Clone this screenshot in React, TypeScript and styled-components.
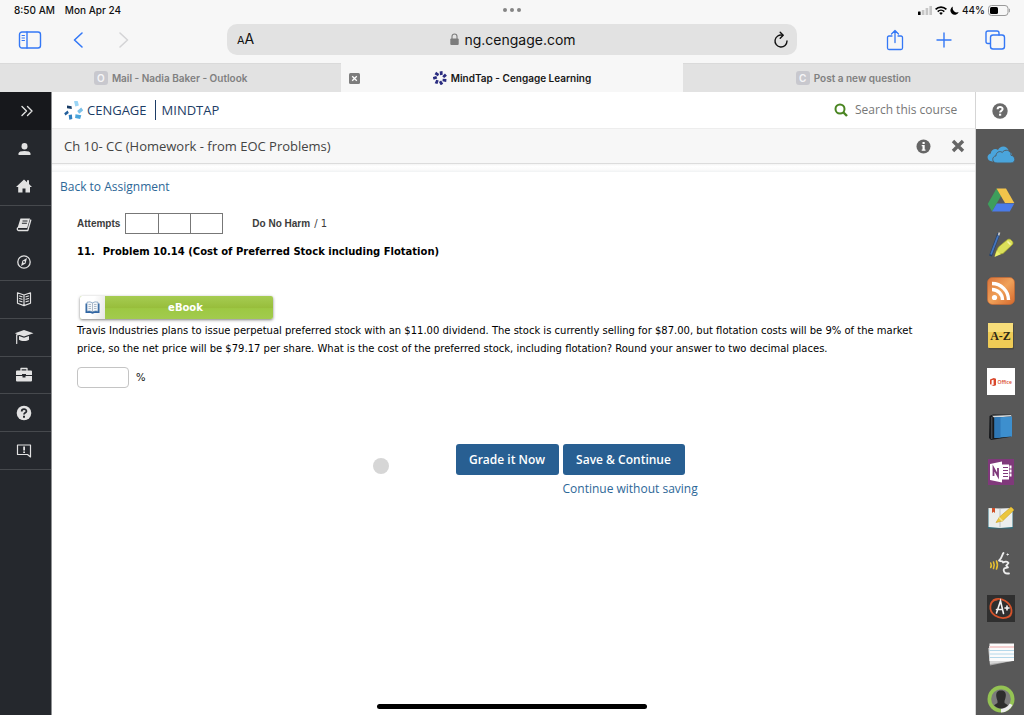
import React from "react";
import styled, { createGlobalStyle } from "styled-components";

const ios = `Inter, "Liberation Sans", sans-serif`;
const open = `"Open Sans", "Noto Sans", sans-serif`;
const verdana = `Verdana, "DejaVu Sans", sans-serif`;

const GlobalStyle = createGlobalStyle`
  *, *::before, *::after { box-sizing: border-box; }
  body { margin: 0; background: #fff; font-family: ${open}; }
  button { font: inherit; padding: 0; border: 0; background: none; cursor: pointer; color: inherit; }
  a { text-decoration: none; color: inherit; }
  svg { display: block; flex: none; }
`;

const Page = styled.div`
  position: relative;
  display: flex;
  flex-direction: column;
  height: 100vh;
  overflow: hidden;
`;

/* ---------- browser chrome ---------- */
const StatusBar = styled.div`
  display: grid;
  grid-template-columns: 1fr auto 1fr;
  align-items: center;
  height: 20px;
  padding: 0 14px;
  background: #f7f7f7;
  font: 500 10px/20px ${ios};
  color: #111;
`;
const StatusLeft = styled.div`
  display: flex;
  gap: 10px;
`;
const StatusRight = styled.div`
  display: flex;
  justify-content: flex-end;
  align-items: center;
  gap: 3px;
`;
const Toolbar = styled.div`
  display: grid;
  grid-template-columns: 1fr minmax(0, 570px) 1fr;
  align-items: center;
  height: 43px;
  padding: 0 18px 4px;
  background: #f7f7f7;
`;
const ToolGroup = styled.div<{ $end?: boolean }>`
  display: flex;
  align-items: center;
  justify-content: ${(p) => (p.$end ? "flex-end" : "flex-start")};
  gap: ${(p) => (p.$end ? "28px" : "24px")};
  color: #3478f6;
`;
const ToolButton = styled.button`
  display: flex;
  color: inherit;
  &:disabled { color: #d4d4d6; }
`;
const AddressBar = styled.div`
  display: grid;
  grid-template-columns: 1fr auto 1fr;
  align-items: center;
  height: 31px;
  padding: 0 8px 0 10px;
  border-radius: 10px;
  background: #e2e2e2;
  color: #111;
`;
const TextSize = styled.button`
  justify-self: start;
  font: 400 14px/20px ${ios};
  small { font-size: 11px; }
`;
const Host = styled.div`
  display: flex;
  align-items: center;
  gap: 5px;
  font: 400 14px/20px ${ios};
`;
const Reload = styled.button`
  justify-self: end;
`;
const TabBar = styled.nav`
  display: grid;
  grid-template-columns: repeat(3, 1fr);
  height: 29px;
  background: #f7f7f7;
`;
const Tab = styled.div<{ $active?: boolean }>`
  display: grid;
  grid-template-columns: 18px 1fr 18px;
  align-items: center;
  padding: 0 8px;
  background: ${(p) => (p.$active ? "#f7f7f7" : "#e2e2e2")};
  border-top: 1px solid ${(p) => (p.$active ? "#f7f7f7" : "#dadada")};
  color: ${(p) => (p.$active ? "#161616" : "#808080")};
  font: 600 10px/14px ${ios};
`;
const TabTitle = styled.a`
  grid-column: 2;
  display: flex;
  align-items: center;
  justify-content: center;
  gap: 4px;
`;
const Favicon = styled.span`
  width: 14px;
  height: 14px;
  border-radius: 3px;
  background: #c8c8ce;
  color: #f5f5f7;
  text-align: center;
`;

/* ---------- course shell ---------- */
const Shell = styled.div`
  flex: 1;
  display: flex;
  min-height: 0;
`;
const SideNav = styled.nav`
  flex: 0 0 52px;
  display: flex;
  flex-direction: column;
  background: #25282d;
  border-right: 1px solid #8f9193;
  color: #e2e2e2;
`;
const Expand = styled.button`
  display: flex;
  align-items: center;
  justify-content: center;
  height: 38px;
  padding-left: 3px;
  background: #17181c;
`;
const NavList = styled.div`
  display: grid;
  grid-template-rows: repeat(9, 1fr);
  height: 340px;
`;
const NavItem = styled.a<{ $line?: boolean }>`
  display: flex;
  align-items: center;
  justify-content: center;
  padding-right: 3px;
  border-bottom: 1px solid ${(p) => (p.$line ? "#46494d" : "transparent")};
`;
const Main = styled.main`
  flex: 1;
  min-width: 0;
  display: flex;
  flex-direction: column;
`;
const BrandBar = styled.header`
  display: flex;
  align-items: center;
  justify-content: space-between;
  height: 37px;
  padding: 0 12px;
  border-bottom: 1px solid #ededed;
`;
const Brand = styled.a`
  display: flex;
  align-items: center;
  gap: 4px;
  color: #1d3d66;
  font: 400 13px/20px ${open};
`;
const BrandProduct = styled.span`
  margin-left: 4px;
  padding-left: 6px;
  border-left: 1px solid #1d3d66;
`;
const Search = styled.label`
  display: flex;
  align-items: center;
  gap: 7px;
`;
const SearchInput = styled.input`
  width: 108px;
  padding: 0;
  border: 0;
  outline: 0;
  background: none;
  font: 400 12px/20px ${open};
  color: #555;
  &::placeholder { color: #777; opacity: 1; }
`;
const TitleBar = styled.div`
  display: flex;
  align-items: center;
  justify-content: space-between;
  height: 35px;
  padding: 0 10px 0 12px;
  background: #f7f7f7;
  border-bottom: 1px solid #dcdcdc;
`;
const ActivityTitle = styled.h1`
  margin: 0;
  font: 400 13px/20px ${open};
  color: #444;
`;
const TitleActions = styled.div`
  display: flex;
  align-items: center;
  gap: 20px;
  color: #6a6a6a;
`;
const Strip = styled.div`
  flex: none;
  height: 8px;
  background: linear-gradient(#f4f4f4, #fff 30%, #fbfbfb 70%, #f0f2f3);
`;
const Content = styled.div`
  flex: 1;
  padding: 2px 26px 0 25px;
`;
const BackLink = styled.a`
  display: inline-block;
  margin-left: -17px;
  font: 400 12px/20px ${open};
  color: #2d6797;
`;
const AttemptRow = styled.div`
  display: flex;
  align-items: center;
  height: 21px;
  margin-top: 16px;
  font: 700 10px/14px "Liberation Sans", Arial, sans-serif;
  color: #3c3c3c;
`;
const AttemptBoxes = styled.div`
  display: grid;
  grid-template-columns: repeat(3, 1fr);
  width: 98px;
  height: 21px;
  margin: 0 29px 0 5px;
  border: 1px solid #777;
`;
const AttemptBox = styled.span`
  & + & { border-left: 1px solid #777; }
`;
const Score = styled.span`
  margin-left: 4px;
  font-weight: 400;
  font-family: ${verdana};
`;
const ProblemTitle = styled.h2`
  display: flex;
  gap: 8px;
  margin: 10px 0 0;
  font: 700 10px/16px ${verdana};
  color: #000;
`;
const EBook = styled.button`
  display: flex;
  width: 193px;
  height: 23px;
  margin: 36px 0 0 3px;
  border-radius: 2px;
  overflow: hidden;
  box-shadow: 0 1px 3px rgba(0, 0, 0, 0.5);
  background: linear-gradient(#a6cc52, #98be3c 50%, #9dc843 55%, #a2cb4e);
`;
const EBookIcon = styled.span`
  display: flex;
  align-items: center;
  justify-content: center;
  width: 25px;
  height: 23px;
  background: linear-gradient(100deg, #fff 50%, #e6e6e6);
`;
const EBookLabel = styled.span`
  flex: 1;
  padding-right: 7px;
  font: 700 10px/23px ${verdana};
  color: #fff;
`;
const Question = styled.p`
  margin: 3px 0 0;
  padding-right: 12px;
  font: 400 10px/18px ${verdana};
  color: #000;
`;
const Answer = styled.label`
  display: flex;
  align-items: center;
  gap: 7px;
  margin-top: 9px;
  font: 400 10px/16px ${verdana};
  color: #111;
`;
const AnswerInput = styled.input`
  width: 52px;
  height: 21px;
  border: 1px solid #c4c4c4;
  border-radius: 4px;
  background: #fff;
`;
const Actions = styled.div`
  display: grid;
  grid-template-columns: 103px 122px 14px;
  justify-content: center;
  column-gap: 4px;
  row-gap: 4px;
  margin-top: 56px;
  padding-left: 132px;
`;
const ActionButton = styled.button`
  height: 31px;
  border-radius: 3px;
  background: #285f92;
  color: #fff;
  font: 600 12px/20px ${open};
`;
const SkipLink = styled.a`
  grid-column: 2 / 4;
  grid-row: 2;
  font: 400 12px/20px ${open};
  color: #2d6797;
  white-space: nowrap;
`;

/* ---------- app rail ---------- */
const Rail = styled.aside`
  flex: 0 0 49px;
  display: flex;
  flex-direction: column;
  border-left: 1px solid #d5d5d5;
`;
const RailHead = styled.button`
  display: flex;
  align-items: center;
  justify-content: center;
  height: 37px;
  flex: none;
`;
const RailApps = styled.div`
  flex: 1;
  display: flex;
  flex-direction: column;
  align-items: center;
  justify-content: space-between;
  padding: 12px 0 2px 1px;
  background: #585858;
`;
const AppButton = styled.button`
  width: 28px;
  height: 28px;
`;

/* ---------- overlays ---------- */
const TouchDot = styled.div`
  position: absolute;
  left: 373px;
  top: 458px;
  width: 16px;
  height: 16px;
  border-radius: 50%;
  background: #d6d6d6;
`;
const HomeIndicator = styled.div`
  position: absolute;
  left: 50%;
  bottom: 6px;
  width: 270px;
  height: 5px;
  transform: translateX(-50%);
  border-radius: 3px;
  background: #000;
`;

const line = { fill: "none", stroke: "currentColor", strokeLinecap: "round", strokeLinejoin: "round" } as const;

const CengageMark = () => (
  <svg width="19" height="19" viewBox="0 0 19 19">
    <path d="M10 .2l3.600-.6 1.300 5-3.600 1z" fill="#9bd5f5" />
    <path d="M13.200 10l4-3.600 2 2.800-4 3.600z" fill="#7cc0e8" />
    <path d="M11.500 13.300l5.800 1-1.200 3.600-5-1z" fill="#49a5dc" />
    <path d="M4.700 14l3.200-.6.4 4.600-3 .8z" fill="#2f7fc0" />
    <path d="M.2 12.200l3.400-2.600 1.200 2.400-3.400 2.400z" fill="#235f9b" />
    <path d="M3 4.600l4.600.6.2 2.900-4.800-.8z" fill="#173c66" />
  </svg>
);

const TabMark = () => (
  <svg width="14" height="14" viewBox="0 0 14 14" fill="#2a2c80">
    {[0, 1, 2, 3, 4, 5, 6].map((i) => (
      <path key={i} d="M6.600.4l2.900-.3.2 3.700-2.600.4z" transform={`rotate(${(i * 360) / 7} 7 7)`} />
    ))}
  </svg>
);

const NavIcons: { label: string; line?: boolean; art: React.ReactNode }[] = [
  {
    label: "Profile",
    art: (
      <svg width="16" height="16" viewBox="0 0 16 16" fill="currentColor">
        <ellipse cx="8.500" cy="6.300" rx="3" ry="3.300" />
        <path d="M2.500 15v-1.500c0-1.700 2.500-2.500 6-2.500s6 .8 6 2.500V15z" />
      </svg>
    ),
  },
  {
    label: "Home",
    line: true,
    art: (
      <svg width="16" height="16" viewBox="0 0 16 16" fill="currentColor">
        <path d="M8 1.500l3 2.700V2.300h2v3.700L16 9h-2v5.500H9.500V10.500h-3v4H2.200V9H0z" />
      </svg>
    ),
  },
  {
    label: "Readings",
    art: (
      <svg width="16" height="16" viewBox="0 0 16 16">
        <path d="M4.500 2.500h9.500l-2.800 9.500H1.500z" fill="currentColor" />
        <path d="M6.500 5h5M5.900 7.200h5" stroke="#25282d" strokeWidth="1.100" />
        <path d="M1.500 12c-.5 1.500 0 2.500 1 2.500h9.300L14.800 4" {...line} strokeWidth="1.300" />
      </svg>
    ),
  },
  {
    label: "Explore",
    line: true,
    art: (
      <svg width="16" height="16" viewBox="0 0 16 16">
        <circle cx="8" cy="8" r="6.200" {...line} strokeWidth="1.300" />
        <path d="M10.900 3.900L9.600 9.400 5.100 12.100 6.400 6.800z" fill="currentColor" />
        <circle cx="8" cy="8" r="0.900" fill="#25282d" />
      </svg>
    ),
  },
  {
    label: "Book",
    line: true,
    art: (
      <svg width="16" height="16" viewBox="0 0 16 16" {...line} strokeWidth="1.200">
        <path d="M8 4L1.500 1.800v10.500L8 14.600l6.500-2.300V1.800zM8 4v10.500" />
        <path d="M3.500 5l2.500.8M3.500 7.500l2.500.8M3.500 10l2.500.8M12.500 5l-2.500.8M12.500 7.500l-2.500.8M12.500 10l-2.500.8" />
      </svg>
    ),
  },
  {
    label: "Courses",
    line: true,
    art: (
      <svg width="20" height="16" viewBox="0 0 20 16">
        <path d="M10 1l9.500 3.300L10 7.500.8 4.300z" fill="currentColor" />
        <path d="M5 7l5 1.800L15 7v3.800c-2 1.700-8 1.700-10 0z" fill="currentColor" />
        <path d="M10 4.300L2.700 5.800v7M2.700 11v3.500" {...line} strokeWidth="1.200" />
      </svg>
    ),
  },
  {
    label: "Toolkit",
    line: true,
    art: (
      <svg width="18" height="16" viewBox="0 0 18 16">
        <path d="M6 3.500V1.500h6v2" {...line} strokeWidth="1.300" />
        <path d="M1 4.500q0-1 1-1h14q1 0 1 1V8H11V7H7v1H1zM1 9h6.500v1.500h3V9H17v4.500q0 1-1 1H2q-1 0-1-1z" fill="currentColor" />
      </svg>
    ),
  },
  {
    label: "Help",
    line: true,
    art: (
      <svg width="16" height="16" viewBox="0 0 16 16">
        <circle cx="8" cy="8" r="7.300" fill="currentColor" />
        <path d="M5.700 6.400c0-3 4.700-3 4.700-.2C10.400 7.900 8 7.800 8 9.500" {...line} stroke="#25282d" strokeWidth="1.800" strokeLinecap="butt" />
        <path d="M7 10.800h2v1.900H7z" fill="#25282d" />
      </svg>
    ),
  },
  {
    label: "Feedback",
    line: true,
    art: (
      <svg width="16" height="16" viewBox="0 0 16 16">
        <path d="M1.500 2h13v12l-3-2.500h-10z" {...line} strokeWidth="1.200" />
        <path d="M7.200 3.500h1.800v4H7.200zM7.200 8.500h1.800v1.600H7.200z" fill="currentColor" />
      </svg>
    ),
  },
];

const RailIcons: { label: string; art: React.ReactNode }[] = [
  {
    label: "OneDrive",
    art: (
      <g fill="#4aa5dc">
        <path d="M5.500 20.500C-.5 20.500-1 13.500 3.800 12.500 4 8.500 8.500 7 11 9c2-5 9.500-5 11 1.500 2 .5 3 2 3 3.500L12 20.500z" />
        <path d="M10 22c-5.500 0-5.500-6.500-1-7.200C9 11 13 9.500 15.300 11.500 17.500 7.500 24.500 9 24 14.300c5 .7 5 7.700 0 7.700z" stroke="#4f5c66" strokeWidth="1" />
      </g>
    ),
  },
  {
    label: "Google Drive",
    art: (
      <g>
        <path d="M9.500 2.500L14 10 5 25.500.7 18z" fill="#3e9e5c" />
        <path d="M9.500 2.500H19L27.300 17H18z" fill="#f3c44b" />
        <path d="M9.800 17.500h17.500l-4.500 8H5z" fill="#4a7be8" />
      </g>
    ),
  },
  {
    label: "Highlighter",
    art: (
      <g>
        <path d="M11.800 1.500L3.500 24" stroke="#25436f" strokeWidth="3" />
        <path d="M11 4L4 22.500" stroke="#4675bd" strokeWidth="1.800" />
        <path d="M12.500.5l-1 3" stroke="#c5c8cc" strokeWidth="1.800" />
        <path d="M8 24l1.500-5 2-4L20.500 7.500q1.500-1 3 0l2 2q1.200 1.500 0 3L16 21.500l-5 1z" fill="#dbe05a" stroke="#a3a62a" strokeWidth=".7" />
        <path d="M9.800 19l4 3.200L7.500 25z" fill="#edf069" />
        <path d="M20.500 9.500l3 3" stroke="#f5f7ad" strokeWidth="1.500" />
      </g>
    ),
  },
  {
    label: "RSS feed",
    art: (
      <g>
        <defs>
          <linearGradient id="rss" x2="1" y2="1">
            <stop stopColor="#d9733a" />
            <stop offset=".5" stopColor="#f0a159" />
            <stop offset="1" stopColor="#d4682c" />
          </linearGradient>
        </defs>
        <rect x=".5" y=".5" width="27" height="27" rx="5" fill="url(#rss)" stroke="#cf6a2f" strokeWidth=".6" />
        <circle cx="7.500" cy="20.500" r="2.600" fill="#fff" />
        <path d="M5 12.500a10.500 10.500 0 0 1 10.500 10.500M5 6.500a16.500 16.500 0 0 1 16.500 16.500" stroke="#fff" strokeWidth="3.400" fill="none" />
      </g>
    ),
  },
  {
    label: "Glossary",
    art: (
      <g>
        <rect x="2" y="2.500" width="25" height="25" rx="1" fill="#3d3a2c" opacity=".5" />
        <rect x="1" y="1" width="25" height="25" rx="1" fill="#efcb55" />
        <path d="M1 1h25v9H1z" fill="#f7dd7a" />
        <text x="13.500" y="17.500" textAnchor="middle" fontFamily="Liberation Serif, serif" fontWeight="700" fontSize="12" fill="#2b2715">A-Z</text>
      </g>
    ),
  },
  {
    label: "Office",
    art: (
      <g>
        <path d="M0 0h28v27H0z" fill="#fff" />
        <path d="M3 11.500L6.800 10 9 10.800v6.500l-2.200.8L3 16.500l3.600.4v-5.200l-2 .5v3.600L3 16.500z" fill="#d9472b" />
        <text x="10.500" y="15.800" fontFamily="Open Sans, sans-serif" fontWeight="600" fontSize="5" fill="#d9472b">Office</text>
      </g>
    ),
  },
  {
    label: "Dictionary",
    art: (
      <g>
        <path d="M2.500 3L6 1.500l18 .3v22L4 27l-2-2z" fill="#17191c" />
        <path d="M5 2.800L24 2l.5 1.500L7 4.500z" fill="#d6dadc" />
        <path d="M7.500 4.500L25 3.500v20L7.500 25z" fill="#3d8fce" />
        <path d="M7.500 4.500l6-.4v20.500l-6 .4z" fill="#2f77b5" />
        <path d="M4.800 4v22" stroke="#55595e" strokeWidth="1" />
      </g>
    ),
  },
  {
    label: "OneNote",
    art: (
      <g>
        <path d="M1 1h26v26H1z" fill="#80397b" />
        <path d="M15 6.500h7v15h-7z" fill="#fff" />
        <path d="M22.500 7.500h2v3h-2zM22.500 11.500h2v3h-2zM22.500 15.500h2v3h-2z" fill="#fff" />
        <path d="M16 9.500h5M16 12.500h5M16 15.500h5M16 18.500h5" stroke="#80397b" strokeWidth="1.200" />
        <path d="M3 6l12-2.500v21L3 22z" fill="#fff" />
        <path d="M6.500 18v-8l4.500 8v-8" stroke="#80397b" strokeWidth="1.800" fill="none" />
      </g>
    ),
  },
  {
    label: "Notebook",
    art: (
      <g>
        <path d="M1 5h25v19.500H1z" fill="#2c6d7c" />
        <path d="M1.500 4L13 4.500 25.500 4v19L13 24 1.500 23z" fill="#eceeed" />
        <path d="M13 4.500v19" stroke="#bcc2c2" strokeWidth="1" />
        <path d="M5 4h3v5L6.500 7.800 5 9z" fill="#cf4e28" />
        <path d="M9 18.500l3.500-5.500L24 3l3 3-11.500 11z" fill="#ebc63c" stroke="#c79f25" strokeWidth=".6" />
        <path d="M12 13.500l3.500 3.500" stroke="#f5e286" strokeWidth="1.500" />
      </g>
    ),
  },
  {
    label: "Read aloud",
    art: (
      <g fill="none" strokeLinecap="round" strokeLinejoin="round">
        <path d="M16.500 4c-1.500 1.500-1.500 5.500-4.500 7.500 1 .8 2.500.8 3.500.8M16 13.500c2-1.200 4.500-1 5.500.5l-2.300 2.700 1.800 1.600-3.700 1c-1.600 2.200.2 5.200 2.700 5.200h2" stroke="#ededed" strokeWidth="1.800" />
        <circle cx="20.500" cy="5.500" r=".6" fill="#eee" stroke="#eee" />
        <path d="M9.500 12q1.800 4 0 8M6.500 13q1.500 3 0 6.500M3.700 14q1.200 2.500 0 4.500" stroke="#e6c031" strokeWidth="1.600" />
      </g>
    ),
  },
  {
    label: "Grades",
    art: (
      <g fill="none" strokeLinecap="round">
        <path d="M0 1h28v27H0z" fill="#2f2f2f" />
        <path d="M10 5.500C2 6.500 1 17 8 21.500c7 4.500 17.500 3 16.500-5.500C23.500 8 14 2.500 6.500 6" stroke="#d4532b" strokeWidth="1.800" />
        <path d="M9.500 19l4-12 3 12.500M9.500 15.500h6M18 14h4M20 12v4" stroke="#f2f2f2" strokeWidth="1.600" />
      </g>
    ),
  },
  {
    label: "Flashcards",
    art: (
      <g>
        <path d="M1 8l23-2 1 15L3 25.500z" fill="#a9a9a9" />
        <path d="M2 6l24-1v16L3 24z" fill="#d6d6d6" />
        <path d="M2.500 3.500H27V21H2.500z" fill="#fbfbfb" />
        <path d="M2.500 7H27" stroke="#eda2a2" strokeWidth="1" />
        <path d="M2.500 10.500H27M2.500 14H27M2.500 17.500H27" stroke="#b4d8ea" strokeWidth="1" />
      </g>
    ),
  },
  {
    label: "Account",
    art: (
      <g>
        <circle cx="14" cy="14" r="13.500" fill="#94c353" />
        <path d="M14 14v13.500A13.500 13.500 0 0 0 25.500 20z" fill="#ececec" />
        <circle cx="14" cy="14" r="9.800" fill="#7b7b7b" />
        <path d="M10.500 16c-3-8-.5-10.500 3.500-10.500S20.500 8 17.500 16v2l3.500 2.300a9.500 9.500 0 0 1-14 0l3.500-2.300z" fill="#2e2e2e" />
      </g>
    ),
  },
];

const HelpCircle = () => (
  <svg width="16" height="16" viewBox="0 0 16 16">
    <circle cx="8" cy="8" r="7.700" fill="#6a6a6a" />
    <path d="M5.600 6.300c0-3.100 5-3.100 5-.2C10.600 7.900 8.100 7.800 8.100 9.500" fill="none" stroke="#fff" strokeWidth="2" />
    <path d="M7 10.700h2.200v2H7z" fill="#fff" />
  </svg>
);

export default function App() {
  return (
    <Page>
      <GlobalStyle />
      <StatusBar>
        <StatusLeft>
          <span>8:50 AM</span>
          <span>Mon Apr 24</span>
        </StatusLeft>
        <svg width="18" height="4" viewBox="0 0 18 4" fill="#858585">
          <circle cx="2" cy="2" r="2" />
          <circle cx="9" cy="2" r="2" />
          <circle cx="16" cy="2" r="2" />
        </svg>
        <StatusRight>
          <svg width="14" height="9" viewBox="0 0 14 9">
            <rect y="5.500" width="2.600" height="3.500" rx=".5" fill="#000" />
            <path d="M3.800 4h2.600v5H3.800zM7.600 2h2.600v7H7.600zM11.400 0H14v9h-2.600z" fill="#c6c6c6" />
          </svg>
          <svg width="12" height="9" viewBox="0 0 12 9" fill="none" stroke="#000" strokeWidth="1.700">
            <path d="M.6 3.400a7.600 7.600 0 0 1 10.800 0M2.700 5.600a4.700 4.700 0 0 1 6.600 0" />
            <path d="M6 9L4.200 7.100a2.600 2.600 0 0 1 3.600 0z" fill="#000" stroke="none" />
          </svg>
          <svg width="9" height="9" viewBox="0 0 9 9">
            <path d="M3 .5A4.300 4.300 0 1 0 8.700 6 4.300 4.300 0 0 1 3 .5z" fill="#000" />
          </svg>
          <span>44%</span>
          <svg width="22" height="11" viewBox="0 0 22 11">
            <rect x=".5" y=".5" width="19.500" height="10" rx="3" fill="none" stroke="#9a9a9a" />
            <rect x="2" y="2" width="8" height="7" rx="1.500" fill="#000" />
            <path d="M21.300 3.800q1.400 1.600 0 3.400z" fill="#9a9a9a" stroke="#9a9a9a" strokeWidth=".6" />
          </svg>
        </StatusRight>
      </StatusBar>

      <Toolbar>
        <ToolGroup>
          <ToolButton aria-label="Show sidebar">
            <svg width="24" height="18" viewBox="0 0 24 18" {...line} strokeWidth="1.400">
              <rect x="1.500" y="1" width="21" height="16" rx="2.500" />
              <path d="M9 1v16" />
              <path d="M4 4.500h2.500M4 7h2.500M4 9.500h2.500" strokeWidth="1" />
            </svg>
          </ToolButton>
          <ToolButton aria-label="Back">
            <svg width="22" height="18" viewBox="0 0 22 18" {...line} strokeWidth="1.600">
              <path d="M16 2L8.500 9l7.500 7" />
            </svg>
          </ToolButton>
          <ToolButton aria-label="Forward" disabled>
            <svg width="22" height="18" viewBox="0 0 22 18" {...line} strokeWidth="1.600">
              <path d="M8 2l7.500 7L8 16" />
            </svg>
          </ToolButton>
        </ToolGroup>
        <AddressBar>
          <TextSize aria-label="Page settings">
            <small>A</small>A
          </TextSize>
          <Host>
            <svg width="9" height="13" viewBox="0 0 9 13">
              <rect x=".3" y="5.500" width="8.400" height="6.500" rx="1" fill="#7c7c7c" />
              <path d="M2 6V3.500a2.500 2.500 0 0 1 5 0V6" fill="none" stroke="#7c7c7c" strokeWidth="1.100" />
            </svg>
            <span>ng.cengage.com</span>
          </Host>
          <Reload aria-label="Reload">
            <svg width="16" height="18" viewBox="0 0 16 18" {...line} strokeWidth="1.400">
              <path d="M9.500 4.200A6 6 0 1 0 14 10" />
              <path d="M7.200 1.300L10.200 4.300 7.200 7.300" />
            </svg>
          </Reload>
        </AddressBar>
        <ToolGroup $end>
          <ToolButton aria-label="Share">
            <svg width="18" height="22" viewBox="0 0 18 22" {...line} strokeWidth="1.300">
              <path d="M6 7H3Q1.500 7 1.500 8.500V19q0 1.500 1.500 1.500h12q1.500 0 1.500-1.500V8.500Q16.500 7 15 7H12M9 13.500V1.500M5.500 5L9 1.500 12.500 5" />
            </svg>
          </ToolButton>
          <ToolButton aria-label="New tab">
            <svg width="24" height="22" viewBox="0 0 24 22" {...line} strokeWidth="1.400">
              <path d="M12 4v14M5 11h14" />
            </svg>
          </ToolButton>
          <ToolButton aria-label="Show tabs">
            <svg width="22" height="22" viewBox="0 0 22 22" {...line} strokeWidth="1.400">
              <path d="M6 14.500H4Q2 14.500 2 12.500V4Q2 2 4 2h9q2 0 2 2v2" />
              <rect x="6.500" y="6" width="14" height="14" rx="2.500" />
            </svg>
          </ToolButton>
        </ToolGroup>
      </Toolbar>

      <TabBar>
        <Tab>
          <TabTitle href="#outlook">
            <Favicon>O</Favicon>Mail - Nadia Baker - Outlook
          </TabTitle>
        </Tab>
        <Tab $active>
          <button aria-label="Close tab">
            <svg width="11" height="11" viewBox="0 0 11 11">
              <rect width="11" height="11" rx="1.500" fill="#7d7d7d" />
              <path d="M3.200 3.200l4.600 4.600M7.800 3.200L3.200 7.800" stroke="#fff" strokeWidth="1.300" />
            </svg>
          </button>
          <TabTitle href="#mindtap">
            <TabMark />
            MindTap - Cengage Learning
          </TabTitle>
        </Tab>
        <Tab>
          <TabTitle href="#question">
            <Favicon>C</Favicon>Post a new question
          </TabTitle>
        </Tab>
      </TabBar>

      <Shell>
        <SideNav aria-label="Course">
          <Expand aria-label="Expand menu">
            <svg width="14" height="12" viewBox="0 0 14 12" {...line} strokeWidth="1.400">
              <path d="M2 1.500L6.500 6 2 10.500M7.500 1.500L12 6l-4.500 4.500" />
            </svg>
          </Expand>
          <NavList>
            {NavIcons.map((n) => (
              <NavItem key={n.label} href="#" aria-label={n.label} $line={n.line}>
                {n.art}
              </NavItem>
            ))}
          </NavList>
        </SideNav>

        <Main>
          <BrandBar>
            <Brand href="#">
              <CengageMark />
              <span>CENGAGE</span>
              <BrandProduct>MINDTAP</BrandProduct>
            </Brand>
            <Search>
              <svg width="14" height="14" viewBox="0 0 14 14" fill="none" stroke="#4a8522">
                <circle cx="6" cy="6" r="4.500" strokeWidth="2" />
                <path d="M9 9l4 4" strokeWidth="2.400" />
              </svg>
              <SearchInput aria-label="Search this course" placeholder="Search this course" />
            </Search>
          </BrandBar>
          <TitleBar>
            <ActivityTitle>Ch 10- CC (Homework - from EOC Problems)</ActivityTitle>
            <TitleActions>
              <button aria-label="Information">
                <svg width="15" height="15" viewBox="0 0 15 15">
                  <circle cx="7.500" cy="7.500" r="7" fill="#666" />
                  <path d="M6.500 3h2.200v2H6.500zM5.700 6h3v4.500h.8v1.200H5.700v-1.200h.8V7.200h-.8z" fill="#fff" />
                </svg>
              </button>
              <button aria-label="Close">
                <svg width="14" height="14" viewBox="0 0 14 14" stroke="#666" strokeWidth="3.400">
                  <path d="M2 2l10 10M12 2L2 12" />
                </svg>
              </button>
            </TitleActions>
          </TitleBar>
          <Strip />
          <Content>
            <BackLink href="#">Back to Assignment</BackLink>
            <AttemptRow>
              <span>Attempts</span>
              <AttemptBoxes>
                <AttemptBox />
                <AttemptBox />
                <AttemptBox />
              </AttemptBoxes>
              <span>Do No Harm</span>
              <Score>/ 1</Score>
            </AttemptRow>
            <ProblemTitle>
              <span>11.</span>
              <span>Problem 10.14 (Cost of Preferred Stock including Flotation)</span>
            </ProblemTitle>
            <EBook>
              <EBookIcon>
                <svg width="15" height="13" viewBox="0 0 15 13">
                  <path d="M.5 2.500h14v9.500h-5l-2 .8-2-.8h-5z" fill="#2f65a3" />
                  <path d="M2 1.200q3-1 5.500.6 2.500-1.600 5.500-.6v9q-3-.8-5.500.6Q5 9.400 2 10.200z" fill="#f3f6f9" stroke="#5b83ad" strokeWidth=".6" />
                  <path d="M7.500 2v8.800M3.500 3.500h2.500M3.500 5.500h2.500M3.500 7.500h2.500M9 3.500h2.500M9 5.500h2.500M9 7.500h2.500" stroke="#9aabbd" strokeWidth=".8" />
                </svg>
              </EBookIcon>
              <EBookLabel>eBook</EBookLabel>
            </EBook>
            <Question>
              Travis Industries plans to issue perpetual preferred stock with an $11.00 dividend. The stock is
              currently selling for $87.00, but flotation costs will be 9% of the market price, so the net price
              will be $79.17 per share. What is the cost of the preferred stock, including flotation? Round your
              answer to two decimal places.
            </Question>
            <Answer>
              <AnswerInput aria-label="Cost of preferred stock, percent" />%
            </Answer>
            <Actions>
              <ActionButton>Grade it Now</ActionButton>
              <ActionButton>Save &amp; Continue</ActionButton>
              <SkipLink href="#">Continue without saving</SkipLink>
            </Actions>
          </Content>
        </Main>

        <Rail>
          <RailHead aria-label="Help">
            <HelpCircle />
          </RailHead>
          <RailApps>
            {RailIcons.map((r) => (
              <AppButton key={r.label} aria-label={r.label}>
                <svg width="28" height="28" viewBox="0 0 28 28">
                  {r.art}
                </svg>
              </AppButton>
            ))}
          </RailApps>
        </Rail>
      </Shell>

      <TouchDot />
      <HomeIndicator />
    </Page>
  );
}
